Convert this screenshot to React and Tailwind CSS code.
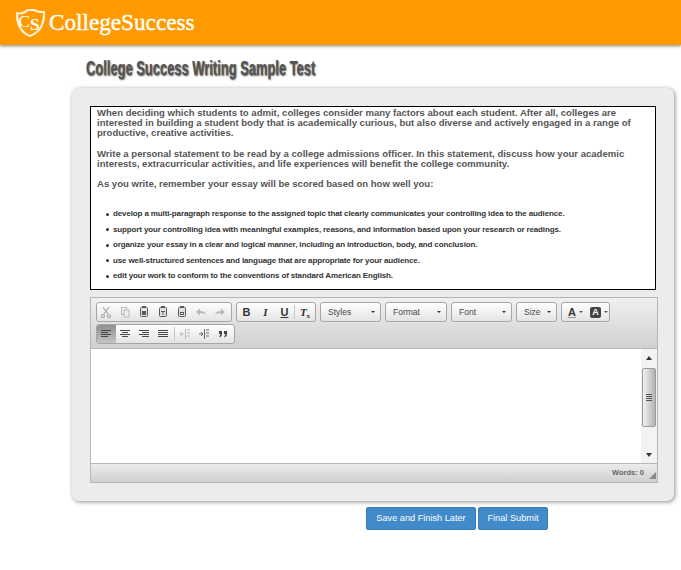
import React from 'react'

const bullets = [
  'develop a multi-paragraph response to the assigned topic that clearly communicates your controlling idea to the audience.',
  'support your controlling idea with meaningful examples, reasons, and information based upon your research or readings.',
  'organize your essay in a clear and logical manner, including an introduction, body, and conclusion.',
  'use well-structured sentences and language that are appropriate for your audience.',
  'edit your work to conform to the conventions of standard American English.',
]

function Logo() {
  return (
    <svg width="31" height="30" viewBox="0 0 31 30" fill="none" className="shrink-0">
      <path d="M1 4 C5 5 9 4 12 1 L20 1 C23 3 26 3 30 3 C31 14 27 25 15 29 C5 26 0 15 1 4 Z" fill="#fff" opacity="0.85" />
      <path d="M3.5 6 C7 7 10 6 13 3 L19 3 C22 5 25 5 28 5 C28 14 25 23 15 27 C7 24 3 15 3.5 6 Z" fill="#ff9b00" />
      <text x="3.5" y="19" fontFamily="Liberation Serif, serif" fontSize="17" fill="#fff">C</text>
      <text x="15" y="22" fontFamily="Liberation Serif, serif" fontSize="17" fontWeight="bold" fill="#fff">S</text>
    </svg>
  )
}

function Icon({ children, active, className }) {
  return (
    <span className={`w-[19px] h-[18px] flex items-center justify-start pl-[3px] shrink-0 ${active ? 'bg-gradient-to-b from-[#8f8f8f] to-[#c4c4c4] ' : ''}${className || ''}`}>
      <svg width="12" height="12" viewBox="0 0 12 12" fill="none">{children}</svg>
    </span>
  )
}

function Lines({ rows }) {
  return rows.map(([x1, x2], i) => (
    <rect key={i} x={x1} y={2 + i * 2} width={x2 - x1} height="1" fill="#474747" />
  ))
}

function Paste({ children }) {
  return (
    <g>
      <rect x="2.5" y="1.5" width="7" height="9" rx="1" fill="#e2e2e2" stroke="#5a5a5a" />
      <rect x="4" y="0" width="4" height="2" fill="#5a5a5a" />
      {children}
    </g>
  )
}

function Group({ children }) {
  return (
    <div className="flex items-center h-[20px] border border-[#a6a6a6] rounded-[3px] bg-gradient-to-b from-white to-[#e4e4e4] overflow-hidden">
      {children}
    </div>
  )
}

function Combo({ label, width }) {
  return (
    <div className={`${width} flex items-center justify-between h-[20px] pl-[7px] pr-[5px] border border-[#a6a6a6] rounded-[3px] bg-gradient-to-b from-white to-[#e4e4e4] text-[8.5px] text-[#484848]`}>
      <span>{label}</span>
      <span className="w-0 h-0 border-x-[2px] border-x-transparent border-t-[2px] border-t-[#2f2f2f]" />
    </div>
  )
}

function Arrow() {
  return <span className="w-0 h-0 ml-[3px] border-x-[2px] border-x-transparent border-t-[2px] border-t-[#555]" />
}

export default function App() {
  return (
    <div className="w-[681px] h-[570px] bg-white overflow-hidden font-['Liberation_Sans',sans-serif]">
      <header className="h-[45px] bg-[#ff9b00] shadow-[0_1px_3px_rgba(0,0,0,0.5)] flex items-center pl-[15px] gap-[3px]">
        <Logo />
        <span className="font-['Liberation_Serif',serif] text-[23.2px] text-white leading-none [-webkit-text-stroke:0.4px_#fff]">CollegeSuccess</span>
      </header>

      <h1 className="ml-[86px] mt-[10px] h-[26px] w-[356px] origin-left scale-x-[0.646] text-[20px] leading-[26px] font-bold whitespace-nowrap text-[#555] [text-shadow:1px_1px_2px_#444]">
        College Success Writing Sample Test
      </h1>

      <main className="ml-[72px] mt-[7px] w-[602px] h-[413px] rounded-[7px] bg-[#ececec] shadow-[1px_1px_4px_rgba(0,0,0,0.45)] pt-[18px] pl-[18px]">
        <section className="w-[566px] h-[184px] border border-black bg-white pt-[1px] pl-[6px] pr-[6px] text-[9.55px] leading-[10px] font-bold text-[#555]">
          <p>When deciding which students to admit, colleges consider many factors about each student. After all, colleges are interested in building a student body that is academically curious, but also diverse and actively engaged in a range of productive, creative activities.</p>
          <p className="mt-[11px]">Write a personal statement to be read by a college admissions officer. In this statement, discuss how your academic interests, extracurricular activities, and life experiences will benefit the college community.</p>
          <p className="mt-[10px]">As you write, remember your essay will be scored based on how well you:</p>
          <ul className="mt-[20px] pl-[9px] flex flex-col gap-[5.5px] text-[8px] tracking-[-0.13px] text-[#333]">
            {bullets.map((b) => (
              <li key={b} className="flex items-center gap-[4px] h-[10px] whitespace-nowrap">
                <span className="w-[3px] h-[3px] rounded-full bg-[#333] shrink-0" />
                {b}
              </li>
            ))}
          </ul>
        </section>

        <section className="mt-[7px] w-[568px] h-[186px] border border-[#b6b6b6] flex flex-col">
          <div className="h-[51px] shrink-0 bg-gradient-to-b from-[#f0f0f0] to-[#d0d0d0] border-b border-[#b6b6b6] pl-[5px] pt-[4px] flex flex-col gap-[2px]">
            <div className="flex gap-[4px]">
              <Group>
                <Icon><g stroke="#a8a8a8" strokeWidth="1.2"><path d="M3 1 L8 8" /><path d="M9 1 L4 8" /><circle cx="3" cy="10" r="1.5" /><circle cx="9" cy="10" r="1.5" /></g></Icon>
                <Icon><g stroke="#bbb"><rect x="2.5" y="1.5" width="5" height="7" /><rect x="5" y="4" width="5" height="7" fill="#eee" /></g></Icon>
                <Icon><Paste><rect x="4" y="5" width="4" height="4" fill="#5a5a5a" /></Paste></Icon>
                <Icon><Paste><path d="M4 5.5 H8 M6 5.5 V9" stroke="#5a5a5a" /></Paste></Icon>
                <Icon><Paste><rect x="4.5" y="6.5" width="3" height="2" fill="#fff" stroke="#5a5a5a" /></Paste></Icon>
                <Icon><path d="M1 6 L5 2.5 V5 C8 5 10 6 11 8.5 C9 7.5 7 7 5 7 V9.5 Z" fill="#b8b8b8" /></Icon>
                <Icon className="mr-[1px]"><path d="M11 6 L7 2.5 V5 C4 5 2 6 1 8.5 C3 7.5 5 7 7 7 V9.5 Z" fill="#b8b8b8" /></Icon>
              </Group>
              <Group>
                <span className="w-[19px] text-center text-[11px] font-bold text-[#333]">B</span>
                <span className="w-[19px] text-center text-[11px] font-bold italic font-['Liberation_Serif',serif] text-[#333]">I</span>
                <span className="w-[19px] text-center text-[11px] font-bold underline text-[#333]">U</span>
                <span className="w-px h-[14px] bg-[#c8c8c8]" />
                <span className="w-[20px] text-center text-[11px] font-bold italic font-['Liberation_Serif',serif] text-[#333]">T<sub className="text-[7px] not-italic">x</sub></span>
              </Group>
              <Combo label="Styles" width="w-[61px]" />
              <Combo label="Format" width="w-[62px]" />
              <Combo label="Font" width="w-[61px]" />
              <Combo label="Size" width="w-[41px]" />
              <Group>
                <div className="w-[24px] pl-[6px] flex items-center">
                  <span className="text-[11px] font-bold text-[#333] underline decoration-[#999] leading-none">A</span>
                  <Arrow />
                </div>
                <div className="w-[23px] pl-[4px] flex items-center">
                  <span className="w-[11px] h-[11px] bg-[#444] rounded-[2px] text-[9px] font-bold text-white leading-[11px] text-center">A</span>
                  <Arrow />
                </div>
              </Group>
            </div>
            <div className="flex">
              <Group>
                <Icon active><Lines rows={[[1, 11], [1, 8], [1, 11], [1, 8]]} /></Icon>
                <Icon><Lines rows={[[1, 11], [3, 9], [1, 11], [3, 9]]} /></Icon>
                <Icon><Lines rows={[[1, 11], [4, 11], [1, 11], [4, 11]]} /></Icon>
                <Icon><Lines rows={[[1, 11], [1, 11], [1, 11], [1, 11]]} /></Icon>
                <span className="w-px h-[14px] mx-[1px] bg-[#c8c8c8]" />
                <Icon><path d="M1 6 H5 M3 4 L1 6 L3 8 M6.5 1 V11 M8 2 H11 M8 5 H11 M8 8 H11" stroke="#b8b8b8" /></Icon>
                <Icon><path d="M1 6 H5 M3 4 L5 6 L3 8 M6.5 1 V11 M8 2 H11 M8 5 H11 M8 8 H11" stroke="#666" /></Icon>
                <Icon className="mr-[1px]"><path d="M2 3 H5 V6 C5 8 4 9 2.5 9.5 V8 C3 7.5 3.3 7 3.3 6 H2 Z M7 3 H10 V6 C10 8 9 9 7.5 9.5 V8 C8 7.5 8.3 7 8.3 6 H7 Z" fill="#474747" /></Icon>
              </Group>
            </div>
          </div>

          <div className="flex-1 min-h-0 bg-white flex justify-end">
            <div className="w-[16px] bg-[#f3f3f3] flex flex-col items-center">
              <span className="mt-[7px] w-0 h-0 border-x-[3.5px] border-x-transparent border-b-[4px] border-b-[#333]" />
              <div className="mt-[8px] w-[14px] h-[59px] rounded-[2px] border border-[#9a9a9a] bg-gradient-to-r from-[#f2f2f2] to-[#b4b4b4] flex flex-col items-center justify-center gap-[1px]">
                <span className="w-[6px] h-px bg-[#555]" />
                <span className="w-[6px] h-px bg-[#555]" />
                <span className="w-[6px] h-px bg-[#555]" />
                <span className="w-[6px] h-px bg-[#555]" />
              </div>
              <span className="mt-[26px] w-0 h-0 border-x-[3.5px] border-x-transparent border-t-[4px] border-t-[#333]" />
            </div>
          </div>

          <div className="h-[19px] shrink-0 bg-gradient-to-b from-[#ececec] to-[#cfcfcf] border-t border-[#b6b6b6] flex items-center justify-end pr-[1px] text-[7.5px] font-bold text-[#666]">
            <span>Words: 0</span>
            <svg width="7" height="7" viewBox="0 0 7 7" className="ml-[5px] mt-[4px]"><path d="M7 0 V7 H0 Z" fill="#8a8a8a" /></svg>
          </div>
        </section>
      </main>

      <div className="ml-[366px] mt-[6px] flex gap-[2px] text-[9.2px] text-white">
        <button className="w-[110px] h-[23px] rounded-[2px] bg-[#428bca] border border-[#357ebd]">Save and Finish Later</button>
        <button className="w-[70px] h-[23px] rounded-[2px] bg-[#428bca] border border-[#357ebd]">Final Submit</button>
      </div>
    </div>
  )
}
